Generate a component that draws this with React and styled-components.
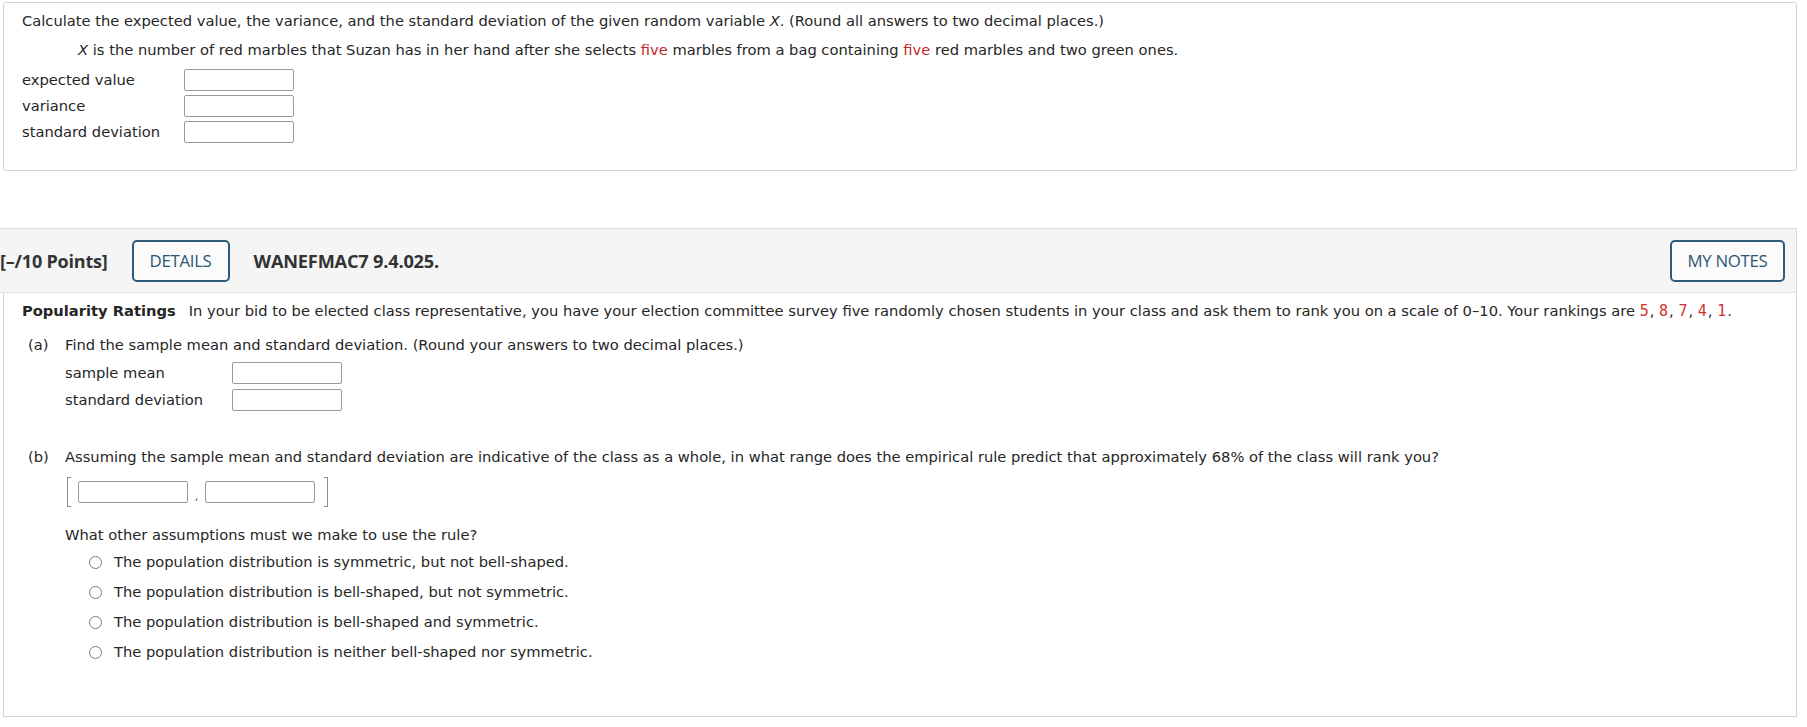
import React from 'react';
import styled, { createGlobalStyle } from 'styled-components';

const GlobalStyle = createGlobalStyle`
  body {
    margin: 0;
    background: #fff;
    color: #262626;
    font-family: "DejaVu Sans", Verdana, sans-serif;
    font-size: 14.7px;
    overflow: hidden;
  }
`

const Page = styled.div`
  padding: 2px 10px 0 3px;
`

const TopCard = styled.section`
  height: 169px;
  box-sizing: border-box;
  border: 1px solid #d2d2d2;
  border-radius: 3px;
  padding: 8px 18px 0;
`

const Line = styled.p`
  margin: ${p => p.mt || 0}px 0 0;
  padding-left: ${p => p.indent || 0}px;
  line-height: 20px;
  white-space: nowrap;
`

const Red = styled.span`
  color: #c1272d;
`

const Num = styled.span`
  color: #d0312d;
  font-family: "DejaVu Sans Mono", "Liberation Mono", monospace;
  font-size: 15px;
  margin-right: 1px;
`

const FieldGrid = styled.div`
  display: grid;
  grid-template-columns: ${p => p.labelWidth}px 110px;
  row-gap: ${p => p.gap}px;
  margin-top: ${p => p.mt}px;
  align-items: center;
`

const Label = styled.span`
  line-height: 22px;
`

const Input = styled.span`
  display: block;
  width: ${p => p.w || 110}px;
  height: 22px;
  box-sizing: border-box;
  border: 1px solid #9a9a9a;
  border-radius: 2px;
  background: #fff;
`

const Question = styled.section`
  margin-top: 57px;
`

const Header = styled.header`
  display: flex;
  align-items: center;
  height: 65px;
  box-sizing: border-box;
  margin-left: -24px;
  padding: 0 11px 0 21px;
  background: #f5f5f5;
  border-top: 1px solid #dedede;
  border-right: 1px solid #d6d6d6;
  border-bottom: 1px solid #e2e2e2;
  font-family: "Open Sans", "Noto Sans", sans-serif;
  color: #333;
`

const Points = styled.span`
  font-weight: 700;
  font-size: 18px;
  letter-spacing: -0.2px;
`

const OutlineButton = styled.span`
  display: inline-flex;
  align-items: center;
  justify-content: center;
  width: ${p => p.w}px;
  height: 42px;
  box-sizing: border-box;
  margin: 0 24px;
  border: 2px solid #2d5b78;
  border-radius: 5px;
  color: #2b5673;
  font-size: 16.8px;
  font-weight: 500;
  letter-spacing: -0.3px;
  background: #fbfbfb;
  ${p => p.right && 'margin: 0 0 0 auto;'}
`

const ProblemId = styled.span`
  font-weight: 700;
  font-size: 18.2px;
  letter-spacing: -0.2px;
`

const Body = styled.div`
  height: 424px;
  box-sizing: border-box;
  border: 1px solid #d2d2d2;
  border-top: none;
  padding: 8px 18px 0;
`

const Lead = styled.strong`
  font-weight: 700;
  margin-right: 13px;
`

const Part = styled.div`
  display: grid;
  grid-template-columns: 37px 1fr;
  padding-left: 6px;
  margin-top: ${p => p.mt}px;
`

const PartTag = styled.span`
  line-height: 20px;
`

const PartBody = styled.div`
  display: flex;
  flex-direction: column;
`

const RangeRow = styled.div`
  display: flex;
  align-items: center;
  margin-top: 9px;
  height: 32px;
`

const Bracket = styled.span`
  width: 4px;
  height: 30px;
  box-sizing: border-box;
  border: 1px solid #8c8c8c;
  ${p => (p.side === 'left' ? 'border-right: none; margin: 0 7px 0 2px;' : 'border-left: none; margin-left: 9px;')}
`

const Comma = styled.span`
  width: 17px;
  align-self: flex-end;
  text-align: center;
  font-size: 11px;
  line-height: 14px;
  margin-bottom: 4px;
  color: #444;
`

const Radios = styled.div`
  display: flex;
  flex-direction: column;
  gap: 10px;
  margin-top: 7px;
  padding-left: 24px;
`

const Option = styled.label`
  display: flex;
  align-items: center;
  line-height: 20px;
`

const Radio = styled.span`
  width: 13px;
  height: 13px;
  box-sizing: border-box;
  border: 1px solid #7a7a7a;
  border-radius: 50%;
  margin-right: 12px;
  background: #fff;
`

const options = [
  'The population distribution is symmetric, but not bell-shaped.',
  'The population distribution is bell-shaped, but not symmetric.',
  'The population distribution is bell-shaped and symmetric.',
  'The population distribution is neither bell-shaped nor symmetric.',
]

export default function App() {
  return (
    <>
      <GlobalStyle />
      <Page>
        <TopCard>
          <Line>
            Calculate the expected value, the variance, and the standard deviation of the given random variable <i>X</i>. (Round all answers to two decimal places.)
          </Line>
          <Line mt={9} indent={56}>
            <i>X</i> is the number of red marbles that Suzan has in her hand after she selects <Red>five</Red> marbles from a bag containing <Red>five</Red> red marbles and two green ones.
          </Line>
          <FieldGrid labelWidth={162} gap={4} mt={9}>
            <Label>expected value</Label>
            <Input />
            <Label>variance</Label>
            <Input />
            <Label>standard deviation</Label>
            <Input />
          </FieldGrid>
        </TopCard>

        <Question>
          <Header>
            <Points>[–/10 Points]</Points>
            <OutlineButton w={98}>DETAILS</OutlineButton>
            <ProblemId>WANEFMAC7 9.4.025.</ProblemId>
            <OutlineButton w={115} right>MY NOTES</OutlineButton>
          </Header>
          <Body>
            <Line>
              <Lead>Popularity Ratings</Lead>In your bid to be elected class representative, you have your election committee survey five randomly chosen students in your class and ask them to rank you on a scale of 0–10. Your rankings are <Num>5</Num>, <Num>8</Num>, <Num>7</Num>, <Num>4</Num>, <Num>1</Num>.
            </Line>
            <Part mt={14}>
              <PartTag>(a)</PartTag>
              <PartBody>
                <Line>Find the sample mean and standard deviation. (Round your answers to two decimal places.)</Line>
                <FieldGrid labelWidth={167} gap={5} mt={7}>
                  <Label>sample mean</Label>
                  <Input />
                  <Label>standard deviation</Label>
                  <Input />
                </FieldGrid>
              </PartBody>
            </Part>
            <Part mt={36}>
              <PartTag>(b)</PartTag>
              <PartBody>
                <Line>Assuming the sample mean and standard deviation are indicative of the class as a whole, in what range does the empirical rule predict that approximately 68% of the class will rank you?</Line>
                <RangeRow>
                  <Bracket side="left" />
                  <Input />
                  <Comma>,</Comma>
                  <Input />
                  <Bracket side="right" />
                </RangeRow>
                <Line mt={17}>What other assumptions must we make to use the rule?</Line>
                <Radios>
                  {options.map(o => (
                    <Option key={o}>
                      <Radio />
                      {o}
                    </Option>
                  ))}
                </Radios>
              </PartBody>
            </Part>
          </Body>
        </Question>
      </Page>
    </>
  );
}
